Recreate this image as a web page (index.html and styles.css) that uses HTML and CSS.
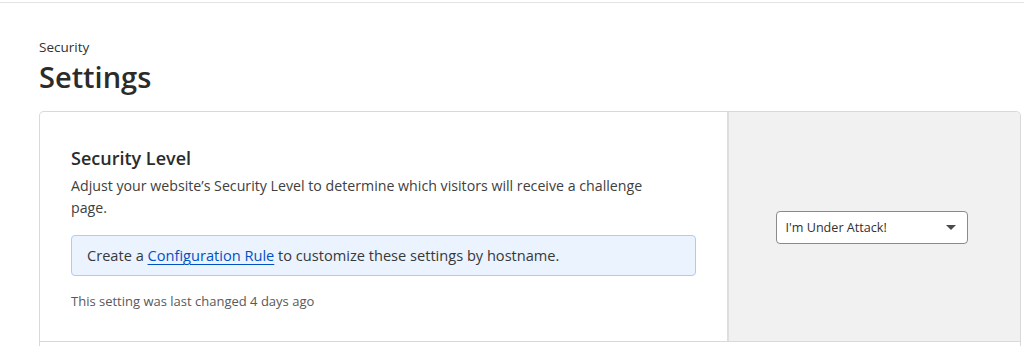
FILE: index.html
```html
<!DOCTYPE html>
<html lang="en">
<head>
    <meta charset="UTF-8">
    <meta name="viewport" content="width=device-width, initial-scale=1.0">
    <title>Security Settings</title>
    <link rel="stylesheet" href="styles.css">
</head>
<body>
    <div class="topbar"></div>

    <div class="page">
        <div class="crumb">Security</div>
        <h1>Settings</h1>

        <!-- Security Level card -->
        <div class="card">
            <div class="row">
                <div class="row-main">
                    <h2>Security Level</h2>
                    <p class="desc">Adjust your website’s Security Level to determine which visitors will receive a challenge page.</p>
                    <div class="callout">
                        Create a <a href="#">Configuration Rule</a> to customize these settings by hostname.
                    </div>
                    <div class="changed">This setting was last changed 4 days ago</div>
                </div>
                <div class="row-side">
                    <div class="select">
                        <span>I'm Under Attack!</span>
                        <span class="caret"></span>
                    </div>
                </div>
            </div>
            <!-- top of the next setting -->
            <div class="row row-next"></div>
        </div>
    </div>
</body>
</html>
```

FILE: styles.css
```css
/* Page */
body {
    font-family: "Open Sans", "Noto Sans", sans-serif;
    background-color: #fff;
    color: #313131;
    margin: 0;
}

.topbar {
    height: 2px;
    border-bottom: 1px solid #e3e3e3;
}

.page {
    padding: 34px 3px 0 39px;
}

.crumb {
    font-size: 13.5px;
    line-height: 20px;
    color: #313131;
}

h1 {
    font-size: 29px;
    font-weight: 600;
    line-height: 36px;
    margin: 2px 0 16px;
    color: #2b2b2b;
}

/* Card */
.card {
    border: 1px solid #d9d9d9;
    border-bottom: none;
    border-radius: 5px 5px 0 0;
    overflow: hidden;
}

.row {
    display: flex;
    border-bottom: 1px solid #d9d9d9;
}

.row-main {
    flex: 0 0 625px;
    padding: 33px 31px 30px 31px;
}

.row-side {
    flex: 1;
    background-color: #f1f1f1;
    border-left: 2px solid #dedede;
    display: flex;
    align-items: center;
    justify-content: center;
    padding: 1px 6px 0 0;
}

.row-next {
    height: 4px;
    border-bottom: none;
}

h2 {
    font-size: 18px;
    font-weight: 600;
    line-height: 26px;
    margin: 0 0 4px;
    color: #2b2b2b;
}

.desc {
    font-size: 14.2px;
    line-height: 22px;
    margin: 0 0 16px;
    color: #404040;
    max-width: 600px;
}

.callout {
    background-color: #ebf3fe;
    border: 1px solid #a9cdf8;
    border-radius: 4px;
    padding: 9px 15px 10px;
    font-size: 14.6px;
    line-height: 20px;
    color: #36393a;
}

.callout a {
    color: #0051c3;
    text-decoration: underline;
    text-underline-offset: 3px;
}

.changed {
    margin-top: 16px;
    font-size: 13px;
    line-height: 19px;
    color: #595959;
}

/* Dropdown */
.select {
    width: 192px;
    height: 33px;
    box-sizing: border-box;
    border: 1px solid #8a8a8a;
    border-radius: 4px;
    background-color: #fff;
    display: flex;
    align-items: center;
    justify-content: space-between;
    padding: 0 11px 0 9px;
    font-size: 12.6px;
    color: #313131;
}

.caret {
    width: 0;
    height: 0;
    border-left: 5px solid transparent;
    border-right: 5px solid transparent;
    border-top: 5px solid #4a4a4a;
}
```
